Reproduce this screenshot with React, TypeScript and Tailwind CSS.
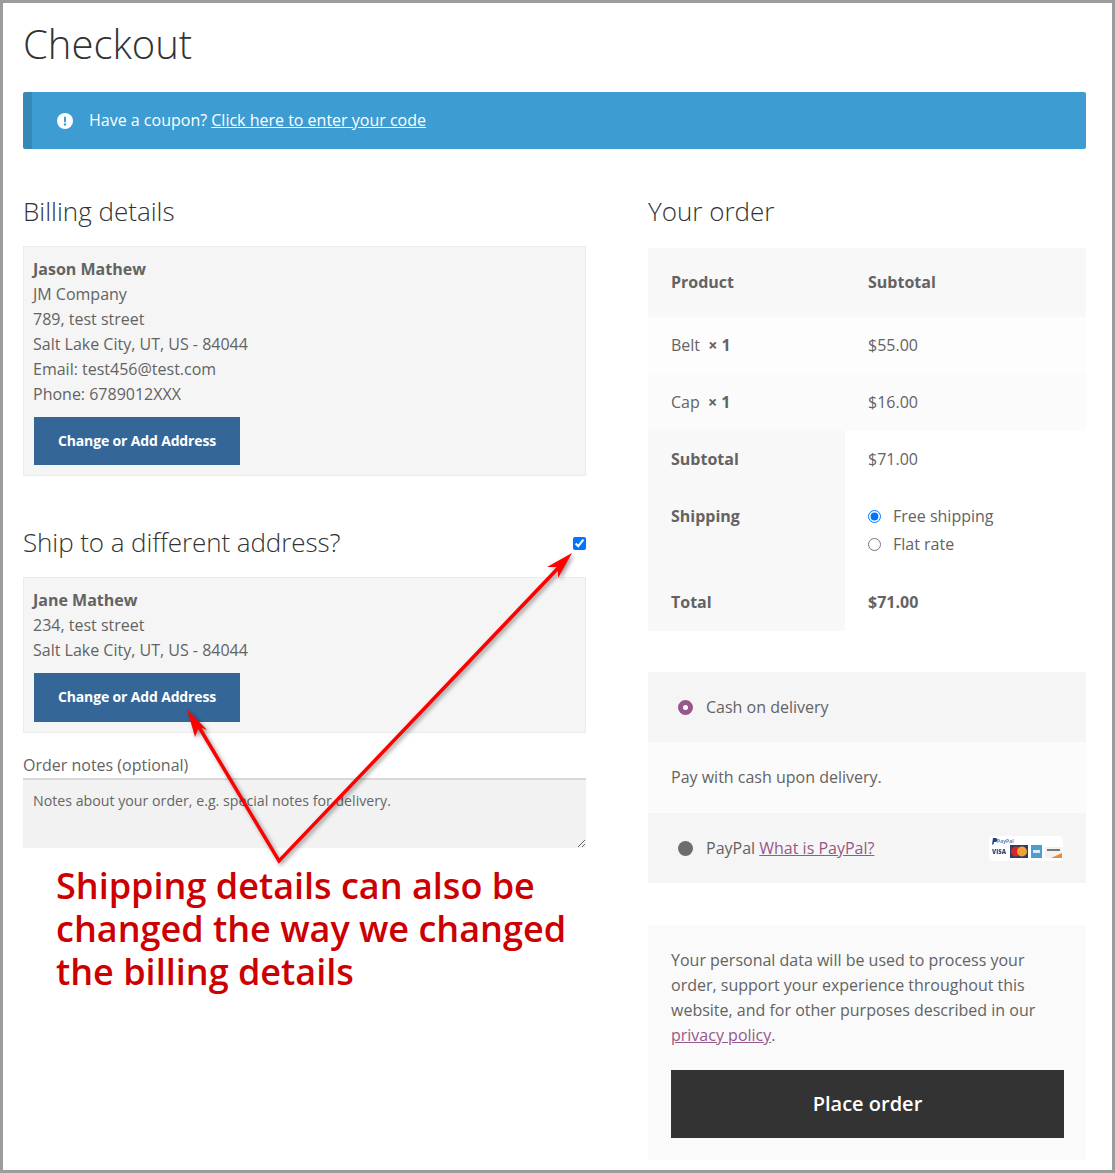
import React from 'react';

const ORDER_ITEMS = [
  { name: 'Belt', price: '$55.00', bg: 'bg-[#fdfdfd]' },
  { name: 'Cap', price: '$16.00', bg: 'bg-[#fbfbfb]' },
];

const AddressCard = ({ name, lines, className, buttonClass }: { name: string; lines: string[]; className: string; buttonClass: string }) => (
  <div className={`border border-[#ebebeb] bg-[#f5f5f5] pl-[9px] ${className}`}>
    <p className="font-bold leading-[25px]">{name}</p>
    {lines.map((line) => (
      <p key={line} className="leading-[25px]">{line}</p>
    ))}
    <button className={`ml-[1px] mt-[10px] w-[206px] bg-[#356698] pb-[2px] text-[14px] font-bold tracking-[-0.15px] text-white ${buttonClass}`}>
      Change or Add Address
    </button>
  </div>
);

const PaymentCards = () => (
  <svg width="74" height="25" viewBox="0 0 74 25" className="rounded-sm bg-white blur-[0.4px]">
    <path d="M4 2h2.500a1.500 1.500 0 0 1 0 4H5L4.500 8.500H3z" fill="#1f3f86" />
    <text x="8" y="6.500" fontSize="5" fontWeight="700" fill="#5f7fb5" fontFamily="Open Sans, sans-serif">PayPal</text>
    <text x="3" y="18" fontSize="6" fontWeight="800" fill="#3b4a72" fontFamily="Open Sans, sans-serif">VISA</text>
    <rect x="21" y="9" width="18" height="13" fill="#2c3e66" />
    <circle cx="27" cy="15.500" r="5" fill="#d8262c" />
    <circle cx="33" cy="15.500" r="5" fill="#f0a12f" />
    <rect x="42" y="9" width="11" height="13" fill="#4b9fd0" />
    <rect x="44" y="14" width="7" height="3" fill="#d9ecf6" />
    <rect x="56" y="11" width="17" height="11" fill="#f2f2f2" />
    <rect x="58" y="13" width="13" height="2" fill="#777" />
    <path d="M62 22 73 17v5z" fill="#ee8a2c" />
  </svg>
);

export default function App() {
  return (
    <div className="relative h-[1173px] w-[1115px] overflow-hidden border-[3px] border-[#9c9c9c] bg-white pl-[20px] pr-[26px] font-['Open_Sans',sans-serif] text-[16px] text-[#636363]">
      <h1 className="mt-[11px] text-[40px] font-light leading-[60px] text-[#333]">Checkout</h1>

      <div className="mt-[18px] flex h-[57px] items-center rounded-[2px] border-l-[9px] border-[#3689b7] bg-[#3d9cd2] pb-[2px] pl-[25px] text-white">
        <svg width="16" height="16" viewBox="0 0 16 16" className="mt-[2px]">
          <circle cx="8" cy="8" r="8" fill="#fff" />
          <rect x="7" y="3.500" width="2" height="6" rx="1" fill="#3d9cd2" />
          <circle cx="8" cy="11.500" r="1.200" fill="#3d9cd2" />
        </svg>
        <span className="ml-[16px]">
          Have a coupon? <a className="underline">Click here to enter your code</a>
        </span>
      </div>

      <div className="mt-[42px] flex justify-between">
        {/* Left column */}
        <div className="w-[563px]">
          <h3 className="text-[26px] font-light leading-[40px] text-[#333]">Billing details</h3>
          <AddressCard
            className="mt-[15px] h-[230px] pt-[10px]"
            buttonClass="h-[48px]"
            name="Jason Mathew"
            lines={[
              'JM Company',
              '789, test street',
              'Salt Lake City, UT, US - 84044',
              'Email: test456@test.com',
              'Phone: 6789012XXX',
            ]}
          />
          <div className="mt-[46px] flex items-center justify-between">
            <h3 className="text-[26px] font-light leading-[40px] tracking-[-0.08px] text-[#333]">Ship to a different address?</h3>
            <input type="checkbox" defaultChecked className="mt-[2px] h-[13px] w-[13px] accent-[#0075ff]" />
          </div>
          <AddressCard
            className="mt-[15px] h-[156px] pt-[10px]"
            buttonClass="h-[49px]"
            name="Jane Mathew"
            lines={['234, test street', 'Salt Lake City, UT, US - 84044']}
          />
          <label className="mt-[20px] block leading-[25px]">Order notes (optional)</label>
          <textarea
            className="block h-[70px] w-full border-t-2 border-[#d8d8d8] bg-[#f2f2f2] px-[10px] py-[11px] text-[14.2px] leading-[20px] placeholder:text-[#666]"
            placeholder="Notes about your order, e.g. special notes for delivery."
          />
          <p className="mt-[16px] pl-[33px] text-[36px] font-semibold leading-[43px] text-[#cc0000]">
            Shipping details can also be changed the way we changed the billing details
          </p>
        </div>

        {/* Right column */}
        <div className="w-[438px]">
          <h3 className="text-[26px] font-light leading-[40px] text-[#333]">Your order</h3>

          <div className="mt-[17px]">
            <div className="flex h-[69px] items-center bg-[#f8f8f8] pb-[2px] font-bold">
              <div className="w-[197px] pl-[23px]">Product</div>
              <div className="pl-[23px]">Subtotal</div>
            </div>
            {ORDER_ITEMS.map((item) => (
              <div key={item.name} className={`flex h-[57px] items-center pb-[2px] ${item.bg}`}>
                <div className="w-[197px] pl-[23px]">
                  {item.name} <span className="ml-[4px] font-bold">× 1</span>
                </div>
                <div className="pl-[23px]">{item.price}</div>
              </div>
            ))}
            <div className="flex h-[57px] items-center">
              <div className="flex h-full w-[197px] items-center bg-[#f8f8f8] pb-[2px] pl-[23px] font-bold">Subtotal</div>
              <div className="pb-[2px] pl-[23px]">$71.00</div>
            </div>
            <div className="flex h-[85px]">
              <div className="w-[197px] bg-[#f8f8f8] pl-[23px] pt-[16px] font-bold">Shipping</div>
              <div className="pl-[23px] pt-[14px]">
                <label className="flex h-[28px] items-center gap-[12px]">
                  <input type="radio" name="ship" defaultChecked className="m-0 h-[13px] w-[13px] accent-[#0075ff]" />
                  Free shipping
                </label>
                <label className="flex h-[28px] items-center gap-[12px]">
                  <input type="radio" name="ship" className="m-0 h-[13px] w-[13px]" />
                  Flat rate
                </label>
              </div>
            </div>
            <div className="flex h-[58px] items-center">
              <div className="flex h-full w-[197px] items-center bg-[#f8f8f8] pl-[23px] font-bold">Total</div>
              <div className="pl-[23px] font-bold">$71.00</div>
            </div>
          </div>

          <div className="mt-[41px]">
            <div className="flex h-[70px] items-center bg-[#f5f5f5] pl-[30px]">
              <span className="h-[15px] w-[15px] rounded-full border-[5px] border-[#96588a] bg-white" />
              <span className="ml-[13px]">Cash on delivery</span>
            </div>
            <div className="flex h-[71px] items-center bg-[#fbfbfb] pb-[2px] pl-[23px]">Pay with cash upon delivery.</div>
            <div className="flex h-[70px] items-center bg-[#f5f5f5] pl-[30px] pr-[23px]">
              <span className="h-[15px] w-[15px] rounded-full bg-[#6d6d6d]" />
              <span className="ml-[13px]">
                PayPal <a className="text-[#96588a] underline">What is PayPal?</a>
              </span>
              <div className="ml-auto">
                <PaymentCards />
              </div>
            </div>
          </div>

          <div className="mt-[42px] h-[235px] bg-[#fafafa] px-[23px] pt-[23px]">
            <p className="leading-[25px]">
              Your personal data will be used to process your order, support your experience throughout this website,
              and for other purposes described in our <a className="text-[#96588a] underline">privacy policy</a>.
            </p>
            <button className="mt-[22px] h-[68px] w-[393px] bg-[#333] text-[20px] font-semibold text-white">Place order</button>
          </div>
        </div>
      </div>

      {/* Callout arrows drawn over the page */}
      <svg className="absolute -left-[3px] -top-[3px] drop-shadow-[2px_2px_2px_rgba(0,0,0,0.4)]" width="1115" height="1173">
        <polyline points="196,722 279,861 563,563" fill="none" stroke="#ff0000" strokeWidth="3.500" />
        <polygon points="187,709 207,730 199,727 195,737" fill="#ff0000" />
        <polygon points="572,553 558,578 558,567 547,567" fill="#ff0000" />
      </svg>
    </div>
  );
}
